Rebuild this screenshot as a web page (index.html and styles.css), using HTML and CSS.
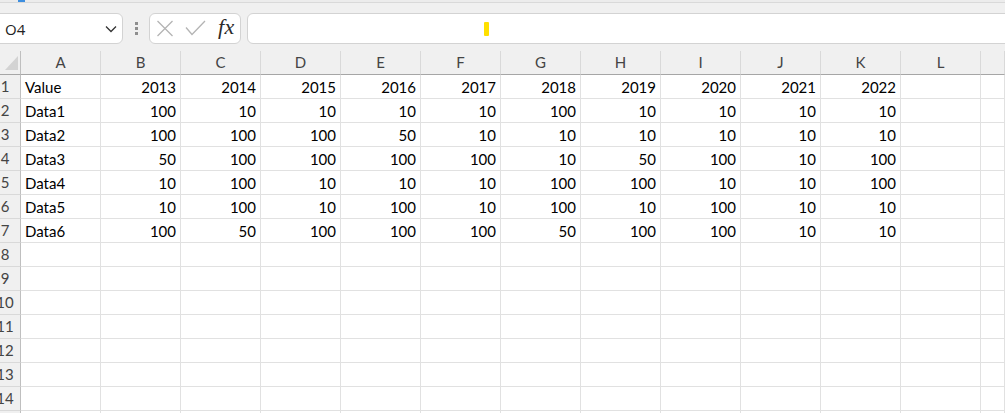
FILE: index.html
```html
<!DOCTYPE html>
<html>
<head>
<meta charset="utf-8">
<link rel="stylesheet" href="styles.css">
</head>
<body>
<div class="topstrip"><span class="tabmark"></span></div>
<div class="fbar">
  <div class="namebox">
    <span class="nametext">O4</span>
    <svg class="chev" width="12" height="8" viewBox="0 0 12 8"><path d="M1 1.5 L6 6.5 L11 1.5" fill="none" stroke="#333" stroke-width="1.3"/></svg>
  </div>
  <div class="dots"><i></i><i></i><i></i></div>
  <div class="btns">
    <svg class="xicon" width="18" height="17" viewBox="0 0 18 17"><path d="M1.5 1 L16.5 16 M16.5 1 L1.5 16" fill="none" stroke="#b4b4b4" stroke-width="1.3"/></svg>
    <svg class="check" width="21" height="16" viewBox="0 0 21 16"><path d="M1 7.5 L7 14.5 L20 1" fill="none" stroke="#b4b4b4" stroke-width="1.3"/></svg>
    <span class="fx">fx</span>
  </div>
  <div class="finput"><span class="cursor"></span></div>
</div>
<div class="sheet">
  <div class="corner"><span class="tri"></span></div>
  <div class="ch">A</div><div class="ch">B</div><div class="ch">C</div><div class="ch">D</div><div class="ch">E</div><div class="ch">F</div><div class="ch">G</div><div class="ch">H</div><div class="ch">I</div><div class="ch">J</div><div class="ch">K</div><div class="ch">L</div><div class="ch"></div>

  <div class="rh"><span>1</span></div><div class="c t">Value</div><div class="c">2013</div><div class="c">2014</div><div class="c">2015</div><div class="c">2016</div><div class="c">2017</div><div class="c">2018</div><div class="c">2019</div><div class="c">2020</div><div class="c">2021</div><div class="c">2022</div><div class="c"></div><div class="c"></div>
  <div class="rh"><span>2</span></div><div class="c t">Data1</div><div class="c">100</div><div class="c">10</div><div class="c">10</div><div class="c">10</div><div class="c">10</div><div class="c">100</div><div class="c">10</div><div class="c">10</div><div class="c">10</div><div class="c">10</div><div class="c"></div><div class="c"></div>
  <div class="rh"><span>3</span></div><div class="c t">Data2</div><div class="c">100</div><div class="c">100</div><div class="c">100</div><div class="c">50</div><div class="c">10</div><div class="c">10</div><div class="c">10</div><div class="c">10</div><div class="c">10</div><div class="c">10</div><div class="c"></div><div class="c"></div>
  <div class="rh"><span>4</span></div><div class="c t">Data3</div><div class="c">50</div><div class="c">100</div><div class="c">100</div><div class="c">100</div><div class="c">100</div><div class="c">10</div><div class="c">50</div><div class="c">100</div><div class="c">10</div><div class="c">100</div><div class="c"></div><div class="c"></div>
  <div class="rh"><span>5</span></div><div class="c t">Data4</div><div class="c">10</div><div class="c">100</div><div class="c">10</div><div class="c">10</div><div class="c">10</div><div class="c">100</div><div class="c">100</div><div class="c">10</div><div class="c">10</div><div class="c">100</div><div class="c"></div><div class="c"></div>
  <div class="rh"><span>6</span></div><div class="c t">Data5</div><div class="c">10</div><div class="c">100</div><div class="c">10</div><div class="c">100</div><div class="c">10</div><div class="c">100</div><div class="c">10</div><div class="c">100</div><div class="c">10</div><div class="c">10</div><div class="c"></div><div class="c"></div>
  <div class="rh"><span>7</span></div><div class="c t">Data6</div><div class="c">100</div><div class="c">50</div><div class="c">100</div><div class="c">100</div><div class="c">100</div><div class="c">50</div><div class="c">100</div><div class="c">100</div><div class="c">10</div><div class="c">10</div><div class="c"></div><div class="c"></div>
  <div class="rh"><span>8</span></div><div class="c"></div><div class="c"></div><div class="c"></div><div class="c"></div><div class="c"></div><div class="c"></div><div class="c"></div><div class="c"></div><div class="c"></div><div class="c"></div><div class="c"></div><div class="c"></div><div class="c"></div>
  <div class="rh"><span>9</span></div><div class="c"></div><div class="c"></div><div class="c"></div><div class="c"></div><div class="c"></div><div class="c"></div><div class="c"></div><div class="c"></div><div class="c"></div><div class="c"></div><div class="c"></div><div class="c"></div><div class="c"></div>
  <div class="rh"><span>10</span></div><div class="c"></div><div class="c"></div><div class="c"></div><div class="c"></div><div class="c"></div><div class="c"></div><div class="c"></div><div class="c"></div><div class="c"></div><div class="c"></div><div class="c"></div><div class="c"></div><div class="c"></div>
  <div class="rh"><span>11</span></div><div class="c"></div><div class="c"></div><div class="c"></div><div class="c"></div><div class="c"></div><div class="c"></div><div class="c"></div><div class="c"></div><div class="c"></div><div class="c"></div><div class="c"></div><div class="c"></div><div class="c"></div>
  <div class="rh"><span>12</span></div><div class="c"></div><div class="c"></div><div class="c"></div><div class="c"></div><div class="c"></div><div class="c"></div><div class="c"></div><div class="c"></div><div class="c"></div><div class="c"></div><div class="c"></div><div class="c"></div><div class="c"></div>
  <div class="rh"><span>13</span></div><div class="c"></div><div class="c"></div><div class="c"></div><div class="c"></div><div class="c"></div><div class="c"></div><div class="c"></div><div class="c"></div><div class="c"></div><div class="c"></div><div class="c"></div><div class="c"></div><div class="c"></div>
  <div class="rh"><span>14</span></div><div class="c"></div><div class="c"></div><div class="c"></div><div class="c"></div><div class="c"></div><div class="c"></div><div class="c"></div><div class="c"></div><div class="c"></div><div class="c"></div><div class="c"></div><div class="c"></div><div class="c"></div>
  <div class="rh"><span></span></div><div class="c"></div><div class="c"></div><div class="c"></div><div class="c"></div><div class="c"></div><div class="c"></div><div class="c"></div><div class="c"></div><div class="c"></div><div class="c"></div><div class="c"></div><div class="c"></div><div class="c"></div>
</div>
</body>
</html>
```

FILE: styles.css
```css
html, body {
  margin: 0;
  padding: 0;
  width: 1005px;
  height: 413px;
  overflow: hidden;
  background: #f0f0f0;
  font-family: Lato, "Open Sans", sans-serif;
}

.topstrip {
  height: 2px;
  background: #ececec;
  border-bottom: 1px solid #d9d9d9;
  position: relative;
}
.tabmark {
  position: absolute;
  left: 18px;
  top: 0;
  width: 7px;
  height: 2px;
  background: #3d8fe0;
}

.fbar {
  display: flex;
  align-items: center;
  height: 31px;
  padding-top: 10px;
  padding-bottom: 7px;
  overflow: hidden;
}

.namebox {
  box-sizing: border-box;
  flex: none;
  margin-left: -8px;
  width: 131px;
  height: 31px;
  background: #fff;
  border: 1px solid #d3d3d3;
  border-radius: 6px;
  display: flex;
  align-items: center;
  padding-left: 12px;
  padding-right: 5px;
}
.nametext {
  font-family: "Open Sans", sans-serif;
  font-size: 15px;
  color: #222;
  flex: 1;
}
.chev {
  display: block;
  margin-top: 1px;
}

.dots {
  flex: none;
  width: 26px;
  display: flex;
  flex-direction: column;
  align-items: center;
  gap: 2px;
}
.dots i {
  display: block;
  width: 3px;
  height: 3px;
  background: #8e8e8e;
}

.btns {
  box-sizing: border-box;
  flex: none;
  width: 92px;
  height: 31px;
  background: #fff;
  border: 1px solid #d3d3d3;
  border-radius: 6px;
  display: flex;
  align-items: center;
  padding-left: 6px;
}
.xicon { display: block; margin-top: -1px; }
.check { display: block; margin-left: 11px; margin-top: -1px; }
.fx {
  font-family: "Liberation Serif", serif;
  font-style: italic;
  font-size: 22px;
  color: #2b2b2b;
  margin-left: 12px;
  margin-top: -3px;
  letter-spacing: 0.5px;
}

.finput {
  box-sizing: border-box;
  flex: none;
  margin-left: 6px;
  width: 780px;
  height: 31px;
  background: #fff;
  border: 1px solid #d3d3d3;
  border-radius: 6px;
  display: flex;
  align-items: center;
}
.cursor {
  display: block;
  margin-left: 236px;
  width: 5px;
  height: 14px;
  border-radius: 1px;
  background: #ffe000;
}

.sheet {
  display: grid;
  grid-template-columns: 21px repeat(12, 80px) 24px;
  grid-template-rows: 24px;
  grid-auto-rows: 24px;
  overflow: hidden;
  height: 362px;
}

.corner {
  box-sizing: border-box;
  border-right: 1px solid #bfbfbf;
  border-bottom: 1px solid #a6a6a6;
  position: relative;
}
.tri {
  position: absolute;
  left: 5px;
  top: 5px;
  width: 0;
  height: 0;
  border-left: 13px solid transparent;
  border-bottom: 14px solid #d3d3d3;
}

.ch {
  box-sizing: border-box;
  border-right: 1px solid #d9d9d9;
  border-bottom: 1px solid #a6a6a6;
  text-align: center;
  font-size: 15px;
  line-height: 23px;
  color: #444;
}

.rh {
  box-sizing: border-box;
  background: #f0f0f0;
  border-right: 1px solid #bfbfbf;
  border-bottom: 1px solid #d9d9d9;
  overflow: hidden;
  font-size: 15px;
  line-height: 23px;
  color: #444;
}
.rh span {
  display: block;
  width: 30px;
  margin-left: -10px;
  text-align: center;
}

.c {
  box-sizing: border-box;
  background: #fff;
  border-right: 1px solid #e1e1e1;
  border-bottom: 1px solid #e1e1e1;
  font-size: 15px;
  line-height: 24px;
  color: #000;
  text-align: right;
  padding: 0 4px;
  white-space: nowrap;
  overflow: hidden;
}
.c.t {
  text-align: left;
}
```
